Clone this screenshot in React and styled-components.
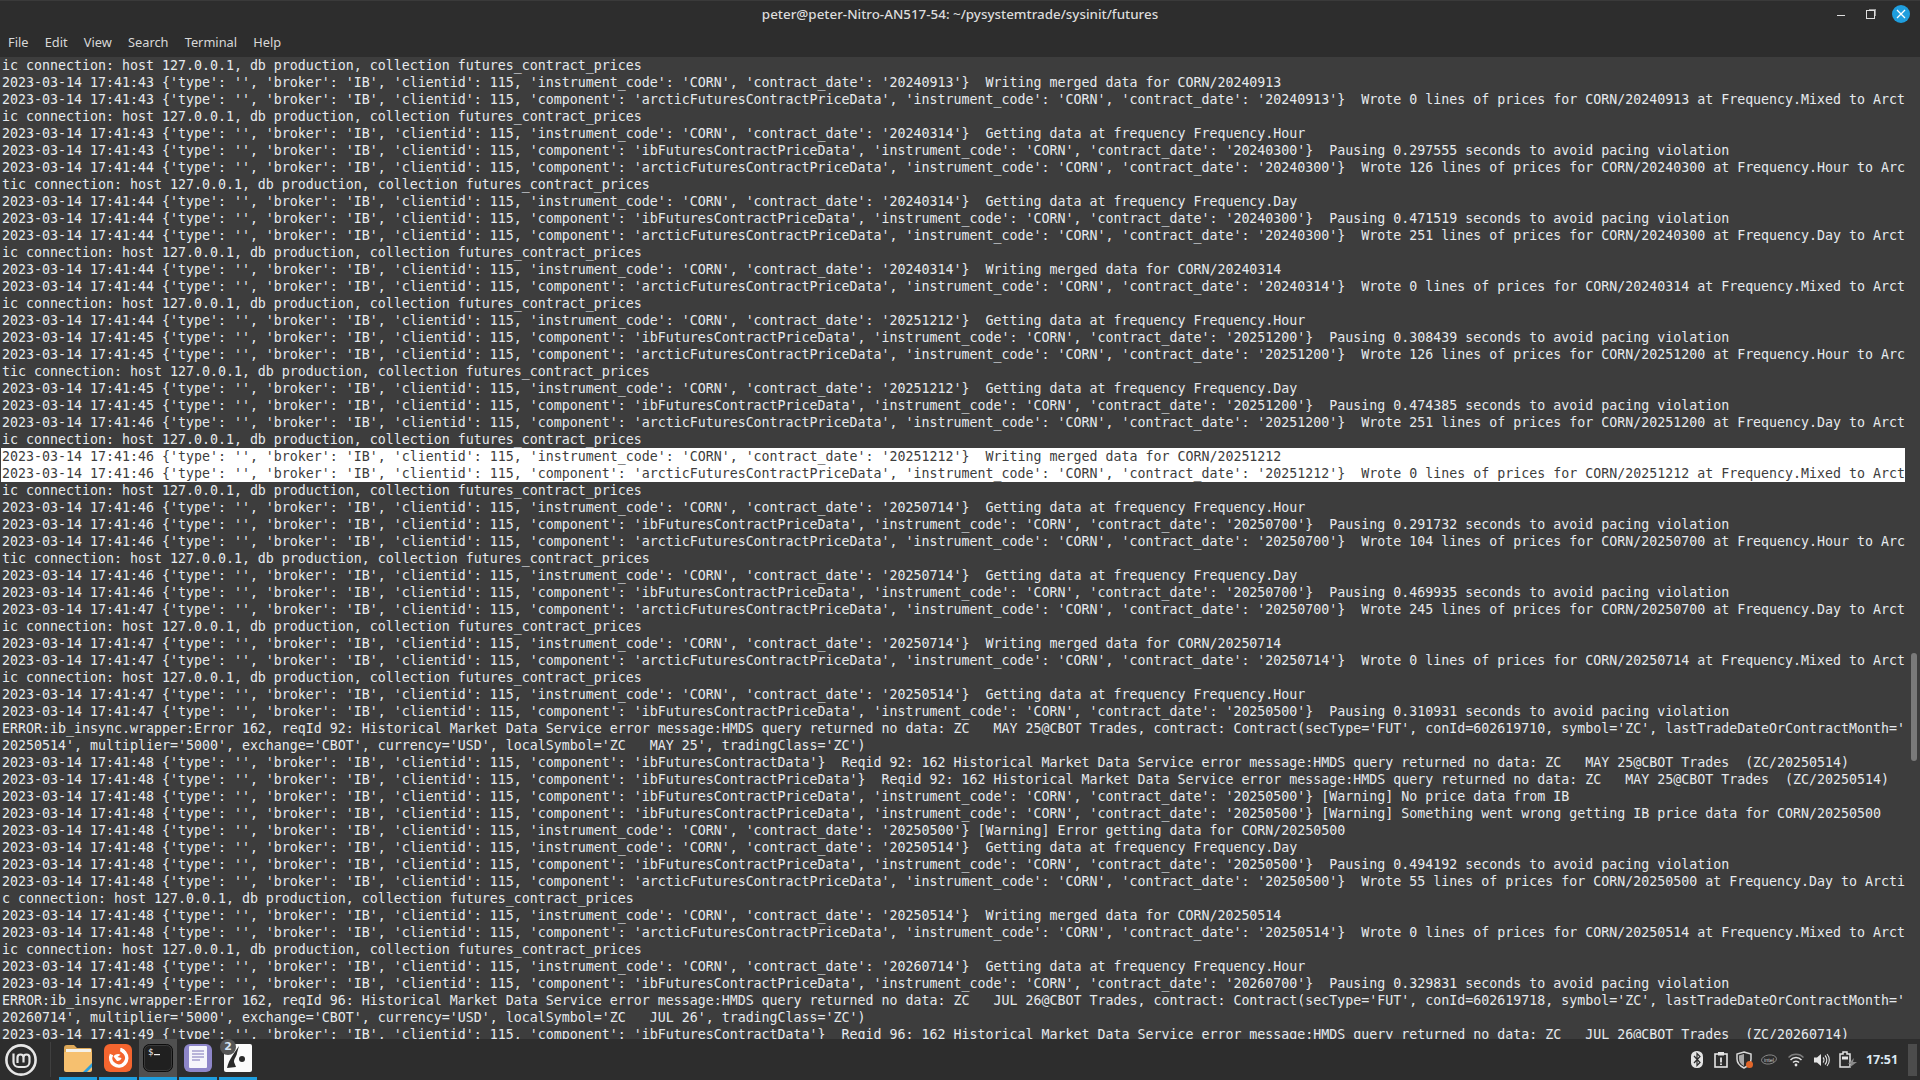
import styled, { createGlobalStyle } from "styled-components";

const GlobalStyle = createGlobalStyle`
  html, body {
    margin: 0;
    padding: 0;
    background: #2d2d2d;
  }
`;

const stamp = (sec) =>
  `2023-03-14 17:41:${sec} {'type': '', 'broker': 'IB', 'clientid': 115, `;
const inst = (sec, date, msg) =>
  `${stamp(sec)}'instrument_code': 'CORN', 'contract_date': '${date}'}${msg}`;
const comp = (name, sec, date, msg) =>
  `${stamp(sec)}'component': '${name}', 'instrument_code': 'CORN', 'contract_date': '${date}'}${msg}`;
const ib = (sec, date, msg) => comp("ibFuturesContractPriceData", sec, date, msg);
const arctic = (sec, date, msg) =>
  comp("arcticFuturesContractPriceData", sec, date, msg);

const conn = " connection: host 127.0.0.1, db production, collection futures_contract_prices";
const getting = (sec, date, freq) =>
  inst(sec, date, `  Getting data at frequency Frequency.${freq}`);
const merged = (sec, date) =>
  inst(sec, date, `  Writing merged data for CORN/${date}`);
const pausing = (sec, date, time) =>
  ib(sec, date, `  Pausing ${time} seconds to avoid pacing violation`);
const wrote = (sec, date, count, freq, tail) =>
  arctic(sec, date, `  Wrote ${count} lines of prices for CORN/${date} at Frequency.${freq} to ${tail}`);
const histErr = (req, contract, conId) =>
  `ERROR:ib_insync.wrapper:Error 162, reqId ${req}: Historical Market Data Service error message:HMDS query returned no data: ZC   ${contract}@CBOT Trades, contract: Contract(secType='FUT', conId=${conId}, symbol='ZC', lastTradeDateOrContractMonth='`;
const histErrEnd = (date, contract) =>
  `${date}', multiplier='5000', exchange='CBOT', currency='USD', localSymbol='ZC   ${contract}', tradingClass='ZC')`;
const reqid = (req, contract, date) =>
  `Reqid ${req}: 162 Historical Market Data Service error message:HMDS query returned no data: ZC   ${contract}@CBOT Trades  (ZC/${date})`;

const LINES = [
  "ic" + conn,
  merged("43", "20240913"),
  wrote("43", "20240913", 0, "Mixed", "Arct"),
  "ic" + conn,
  getting("43", "20240314", "Hour"),
  pausing("43", "20240300", "0.297555"),
  wrote("44", "20240300", 126, "Hour", "Arc"),
  "tic" + conn,
  getting("44", "20240314", "Day"),
  pausing("44", "20240300", "0.471519"),
  wrote("44", "20240300", 251, "Day", "Arct"),
  "ic" + conn,
  merged("44", "20240314"),
  wrote("44", "20240314", 0, "Mixed", "Arct"),
  "ic" + conn,
  getting("44", "20251212", "Hour"),
  pausing("45", "20251200", "0.308439"),
  wrote("45", "20251200", 126, "Hour", "Arc"),
  "tic" + conn,
  getting("45", "20251212", "Day"),
  pausing("45", "20251200", "0.474385"),
  wrote("46", "20251200", 251, "Day", "Arct"),
  "ic" + conn,
  merged("46", "20251212"),
  wrote("46", "20251212", 0, "Mixed", "Arct"),
  "ic" + conn,
  getting("46", "20250714", "Hour"),
  pausing("46", "20250700", "0.291732"),
  wrote("46", "20250700", 104, "Hour", "Arc"),
  "tic" + conn,
  getting("46", "20250714", "Day"),
  pausing("46", "20250700", "0.469935"),
  wrote("47", "20250700", 245, "Day", "Arct"),
  "ic" + conn,
  merged("47", "20250714"),
  wrote("47", "20250714", 0, "Mixed", "Arct"),
  "ic" + conn,
  getting("47", "20250514", "Hour"),
  pausing("47", "20250500", "0.310931"),
  histErr(92, "MAY 25", "602619710"),
  histErrEnd("20250514", "MAY 25"),
  `${stamp("48")}'component': 'ibFuturesContractData'}  ${reqid(92, "MAY 25", "20250514")}`,
  `${stamp("48")}'component': 'ibFuturesContractPriceData'}  ${reqid(92, "MAY 25", "20250514")}`,
  ib("48", "20250500", " [Warning] No price data from IB"),
  ib("48", "20250500", " [Warning] Something went wrong getting IB price data for CORN/20250500"),
  inst("48", "20250500", " [Warning] Error getting data for CORN/20250500"),
  getting("48", "20250514", "Day"),
  pausing("48", "20250500", "0.494192"),
  wrote("48", "20250500", 55, "Day", "Arcti"),
  "c" + conn,
  merged("48", "20250514"),
  wrote("48", "20250514", 0, "Mixed", "Arct"),
  "ic" + conn,
  getting("48", "20260714", "Hour"),
  pausing("49", "20260700", "0.329831"),
  histErr(96, "JUL 26", "602619718"),
  histErrEnd("20260714", "JUL 26"),
  `${stamp("49")}'component': 'ibFuturesContractData'}  ${reqid(96, "JUL 26", "20260714")}`,
];

const SELECTED = [23, 24];
const MENU = ["File", "Edit", "View", "Search", "Terminal", "Help"];

function MintLogo() {
  return (
    <svg width="34" height="34" viewBox="0 0 34 34" fill="none" stroke="#e6e6e6">
      <circle cx="17" cy="17" r="14.6" strokeWidth="2.6" />
      <path
        d="M9.5 10.5v8.5a5 5 0 0 0 5 5h6a5 5 0 0 0 5-5v-4.5a3 3 0 0 0-6 0v5M19.5 14.5a3 3 0 0 0-6 0v5.5"
        strokeWidth="2.2"
      />
    </svg>
  );
}

function FolderIcon() {
  return (
    <svg width="30" height="28" viewBox="0 0 30 28">
      <path d="M1 4a3 3 0 0 1 3-3h7l3 3h13a2 2 0 0 1 2 2v6H1z" fill="#dda858" />
      <rect x="3" y="5" width="25" height="3" fill="#f4f1ea" />
      <path d="M1 9q0-1 1-1h26q1 0 1 1v17a2 2 0 0 1-2 2H3a2 2 0 0 1-2-2z" fill="#f6c06f" />
      <path d="M20 28l9-9v4l-5 5z" fill="#2a9fdc" />
    </svg>
  );
}

function FoxIcon() {
  return (
    <svg width="28" height="28" viewBox="0 0 28 28">
      <rect width="28" height="28" rx="6" fill="#f4652f" />
      <path
        d="M7.500 10.500a8 8 0 1 0 13.500-1.500c-1-1.500-2.500-2.800-4.500-3.500"
        fill="none"
        stroke="#fff"
        strokeWidth="3.600"
      />
      <path d="M16 4c3 .5 5.500 2.500 6.500 5.500L18 9z" fill="#fff" />
      <path d="M9.500 12.500c2-2.500 5-3 7-1.800l-3 2.300 4 1c-.5 2-2.500 3.300-4.500 3z" fill="#fff" />
    </svg>
  );
}

function TerminalIcon() {
  return (
    <svg width="30" height="28" viewBox="0 0 30 28">
      <rect x="0.500" y="0.500" width="29" height="27" rx="6" fill="#202020" stroke="#0c0c0c" />
      <rect x="1.500" y="1.500" width="27" height="25" rx="5" fill="none" stroke="#3a3a3a" />
      <text x="5" y="11" fill="#eee" fontSize="9" fontFamily="'DejaVu Sans Mono', monospace">$</text>
      <rect x="11" y="10" width="6" height="1.200" fill="#eee" />
    </svg>
  );
}

function NotesIcon() {
  return (
    <svg width="28" height="28" viewBox="0 0 28 28">
      <rect width="28" height="28" rx="6" fill="#8e86c9" />
      <rect x="5" y="2" width="18" height="22" rx="1" fill="#f5f5fb" />
      <path d="M8 7h12M8 10h12M8 13h12M8 16h8" stroke="#7c74b8" strokeWidth="1" />
    </svg>
  );
}

function QuillIcon() {
  return (
    <svg width="28" height="28" viewBox="0 0 28 28">
      <rect width="28" height="28" rx="2" fill="#fbfbfb" />
      <path d="M15 2C11 8 5 15 3 24l9-1-2-5c0-4 3-6 3-9z" fill="#2a2a2a" />
      <circle cx="18" cy="15" r="3" fill="#2a2a2a" />
    </svg>
  );
}

function BluetoothIcon() {
  return (
    <svg width="12" height="17" viewBox="0 0 12 17">
      <rect width="12" height="17" rx="5.500" fill="#e4e4e4" />
      <path d="M3 5l6 6.500-3 3V2.500l3 3L3 12" fill="none" stroke="#2d2d2d" strokeWidth="1.200" />
    </svg>
  );
}

function ClipboardIcon() {
  return (
    <svg width="14" height="17" viewBox="0 0 14 17">
      <rect x="1" y="3" width="12" height="13" fill="none" stroke="#e4e4e4" strokeWidth="1.600" />
      <rect x="4" y="1" width="6" height="3.500" fill="#e4e4e4" />
      <path d="M7 6.500v5M7 12.500v1.500" stroke="#e4e4e4" strokeWidth="1.800" />
    </svg>
  );
}

function ShieldIcon() {
  return (
    <svg width="18" height="18" viewBox="0 0 18 18">
      <path d="M8 1l7 2v5c0 4-3 7-7 9-4-2-7-5-7-9V3z" fill="none" stroke="#d8d8d8" strokeWidth="1.500" />
      <path d="M8 3v12c-3-1.500-5-4-5-7V4.500z" fill="#a8a8a8" />
      <circle cx="13.500" cy="13.500" r="3.500" fill="#e2662a" />
    </svg>
  );
}

function IntelIcon() {
  return (
    <svg width="16" height="11" viewBox="0 0 16 11">
      <ellipse cx="8" cy="5.500" rx="7.500" ry="4.500" fill="none" stroke="#a8a8a8" strokeWidth="0.700" transform="rotate(-8 8 5.500)" />
      <text x="8" y="7.500" textAnchor="middle" fill="#c8c8c8" fontSize="5.500" fontFamily="'Liberation Sans', sans-serif">intel</text>
    </svg>
  );
}

function WifiIcon() {
  return (
    <svg width="16" height="14" viewBox="0 0 16 14" fill="none">
      <path d="M.5 4.500a10.500 10.500 0 0 1 15 0" stroke="#7d7d7d" strokeWidth="1.500" />
      <path d="M2.500 7a7.500 7.500 0 0 1 11 0M5 9.500a4 4 0 0 1 6 0" stroke="#e4e4e4" strokeWidth="1.500" />
      <circle cx="8" cy="12" r="1.400" fill="#e4e4e4" />
    </svg>
  );
}

function VolumeIcon() {
  return (
    <svg width="16" height="14" viewBox="0 0 16 14" fill="none">
      <path d="M0 4.500h3L7 1v12L3 9.500H0z" fill="#e4e4e4" />
      <path d="M9 4.500a3.500 3.500 0 0 1 0 5M11 2.500a6.500 6.500 0 0 1 0 9M13 1a9 9 0 0 1 0 12" stroke="#e4e4e4" strokeWidth="1.100" />
    </svg>
  );
}

function BatteryIcon() {
  return (
    <svg width="19" height="18" viewBox="0 0 19 18">
      <path d="M1 3h3V1h4v2h3v13H1z" fill="none" stroke="#e4e4e4" strokeWidth="1.500" />
      <path d="M3 5.500h6v3H3z" fill="#e4e4e4" />
      <path d="M15 7l-6 6h3l-2 4 8-6h-4z" fill="#8a8a8a" />
    </svg>
  );
}

const LAUNCHERS = [
  { id: "files", icon: <FolderIcon /> },
  { id: "fox", icon: <FoxIcon /> },
  { id: "term", icon: <TerminalIcon />, active: true },
  { id: "notes", icon: <NotesIcon /> },
  { id: "quill", icon: <QuillIcon />, badge: 2 },
];

const TRAY = [
  { id: "bluetooth", width: 24, icon: <BluetoothIcon /> },
  { id: "clipboard", width: 24, icon: <ClipboardIcon /> },
  { id: "shield", width: 24, icon: <ShieldIcon /> },
  { id: "intel", width: 24, icon: <IntelIcon /> },
  { id: "wifi", width: 30, icon: <WifiIcon /> },
  { id: "volume", width: 22, icon: <VolumeIcon /> },
  { id: "battery", width: 30, icon: <BatteryIcon /> },
];

export default function App() {
  return (
    <Desktop>
      <GlobalStyle />
      <Header>
        <TitleRow>
          <span />
          <Title>peter@peter-Nitro-AN517-54: ~/pysystemtrade/sysinit/futures</Title>
          <WindowControls>
            <MinimizeButton />
            <MaximizeButton />
            <CloseButton>
              <svg width="10" height="10" viewBox="0 0 10 10">
                <path d="M1 1l8 8M9 1l-8 8" stroke="#fff" strokeWidth="1.300" />
              </svg>
            </CloseButton>
          </WindowControls>
        </TitleRow>
        <MenuRow>
          {MENU.map((item) => (
            <MenuItem key={item}>{item}</MenuItem>
          ))}
        </MenuRow>
      </Header>
      <Terminal>
        <Log>
          {LINES.map((line, i) => (
            <Line key={i} $selected={SELECTED.includes(i)}>
              {line}
            </Line>
          ))}
        </Log>
        <ScrollTrack>
          <ScrollThumb />
        </ScrollTrack>
      </Terminal>
      <Panel>
        <MenuButton>
          <MintLogo />
        </MenuButton>
        <PanelDivider />
        <Launchers>
          {LAUNCHERS.map((app) => (
            <Launcher key={app.id} $active={app.active}>
              {app.icon}
              {app.badge && <Badge>{app.badge}</Badge>}
            </Launcher>
          ))}
        </Launchers>
        <Tray>
          {TRAY.map((item) => (
            <TraySlot key={item.id} $width={item.width}>
              {item.icon}
            </TraySlot>
          ))}
          <Clock>17:51</Clock>
          <ShowDesktop />
        </Tray>
      </Panel>
    </Desktop>
  );
}

const Desktop = styled.div`
  width: 1920px;
  height: 1080px;
  display: flex;
  flex-direction: column;
  overflow: hidden;
  background: #2d2d2d;
`;

const Header = styled.header`
  height: 57px;
  flex-shrink: 0;
  display: flex;
  flex-direction: column;
  background: #2d2d2d;
  border-top: 1px solid #3a3a3a;
  box-sizing: border-box;
`;

const TitleRow = styled.div`
  height: 26px;
  display: grid;
  grid-template-columns: 1fr auto 1fr;
  align-items: center;
`;

const Title = styled.div`
  font: 500 13.4px "Noto Sans", sans-serif;
  color: #dcdcdc;
`;

const WindowControls = styled.div`
  display: flex;
  align-items: center;
  justify-content: flex-end;
  padding-right: 10px;
`;

const MinimizeButton = styled.div`
  width: 8px;
  height: 1px;
  background: #dedede;
  margin-top: 3px;
`;

const MaximizeButton = styled.div`
  width: 7px;
  height: 7px;
  margin-left: 21px;
  border: 1px solid #dedede;
  box-shadow: 2px -2px 0 -1px #9a9a9a;
`;

const CloseButton = styled.div`
  width: 18px;
  height: 18px;
  margin-left: 17px;
  border-radius: 50%;
  background: #1f9ede;
  display: flex;
  align-items: center;
  justify-content: center;
`;

const MenuRow = styled.nav`
  height: 30px;
  display: flex;
  align-items: center;
  padding-left: 8px;
  gap: 16.2px;
`;

const MenuItem = styled.span`
  font: 12.8px "Noto Sans", sans-serif;
  color: #d8d8d8;
`;

const Terminal = styled.main`
  height: 982px;
  flex-shrink: 0;
  display: flex;
  background: #3d3d3d;
  overflow: hidden;
`;

const Log = styled.div`
  width: 1905px;
  box-sizing: border-box;
  padding-left: 1px;
  flex-shrink: 0;
  overflow: hidden;
`;

const Line = styled.div`
  height: 17px;
  padding-left: 1px;
  line-height: 17px;
  font-family: "DejaVu Sans Mono", monospace;
  font-size: 13.29px;
  white-space: pre;
  color: ${(props) => (props.$selected ? "#3d3d3d" : "#e6eaee")};
  background: ${(props) => (props.$selected ? "#ffffff" : "transparent")};
`;

const ScrollTrack = styled.div`
  flex: 1;
  padding: 596px 3px 0 6px;
`;

const ScrollThumb = styled.div`
  height: 108px;
  border-radius: 3px;
  background: #7a7a7a;
`;

const Panel = styled.footer`
  height: 41px;
  flex-shrink: 0;
  display: flex;
  align-items: stretch;
  background: #2d2d2d;
`;

const MenuButton = styled.div`
  width: 42px;
  display: flex;
  align-items: center;
  justify-content: center;
  margin-right: 8px;
`;

const PanelDivider = styled.div`
  width: 1px;
  margin: 3px 0;
  background: #3f3f3f;
`;

const Launchers = styled.div`
  display: flex;
  gap: 2px;
  margin-left: 8px;
`;

const Launcher = styled.div`
  position: relative;
  width: 38px;
  box-sizing: border-box;
  display: flex;
  align-items: center;
  justify-content: center;
  border-bottom: 3px solid #1f9ede;
  background: ${(props) => (props.$active ? "#505050" : "transparent")};
`;

const Badge = styled.span`
  position: absolute;
  left: 1px;
  top: 0;
  width: 16px;
  height: 16px;
  border-radius: 50%;
  background: #565656;
  color: #d4e4f2;
  font: 700 11px/16px "DejaVu Sans", sans-serif;
  text-align: center;
`;

const Tray = styled.div`
  margin-left: auto;
  display: flex;
  align-items: center;
`;

const TraySlot = styled.div`
  width: ${(props) => props.$width}px;
  display: flex;
  align-items: center;
  justify-content: center;
`;

const Clock = styled.div`
  width: 38px;
  text-align: center;
  font: 700 12.5px "Noto Sans", sans-serif;
  color: #dce8f2;
`;

const ShowDesktop = styled.div`
  width: 9px;
  height: 32px;
  margin: 0 3px 0 7px;
  background: #4c4c4c;
`;
